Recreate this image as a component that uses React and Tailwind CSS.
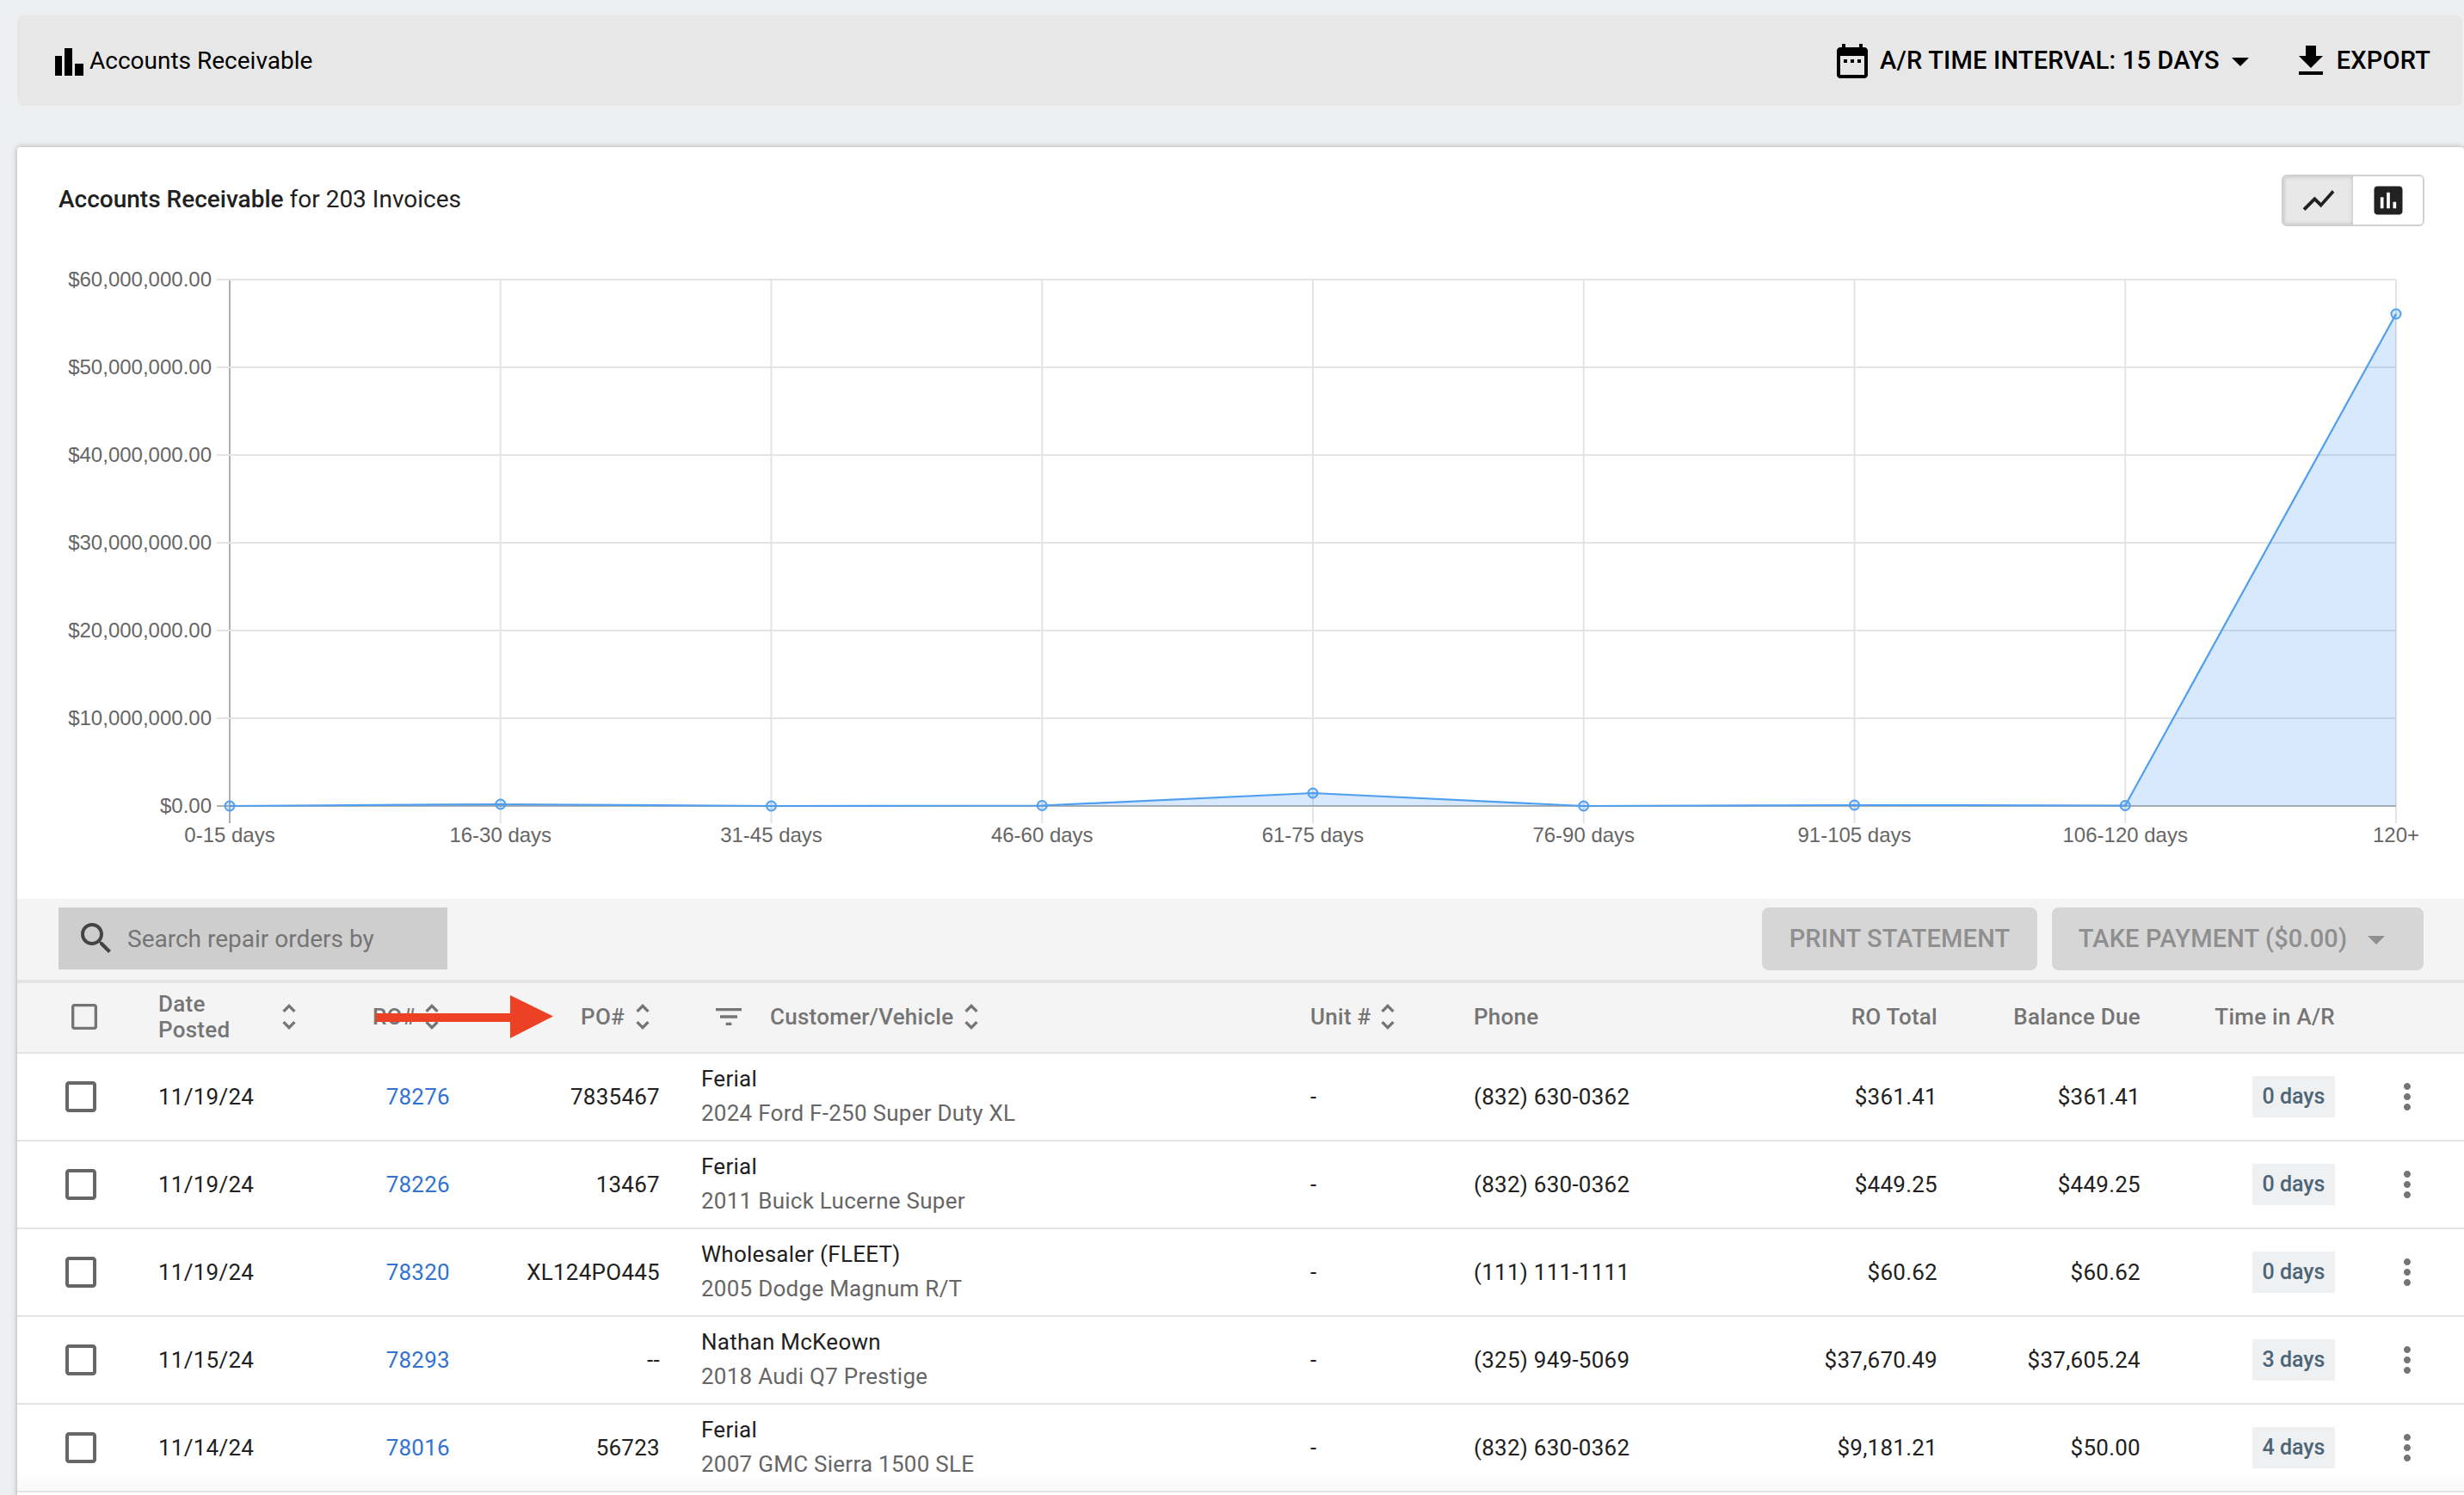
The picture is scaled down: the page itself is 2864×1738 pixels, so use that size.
import React from "react";

const ROW = "grid grid-cols-[164px_236px_105px_242px_756px_190px_339px_200px_236px_226px_150px] items-center";

const Icon = ({ d, size = 48, className = "" }) => (
  <svg width={size} height={size} viewBox="0 0 24 24" fill="currentColor" className={"shrink-0 " + className}>
    <path d={d} />
  </svg>
);

const P = {
  date: "M9 11H7v2h2v-2zm4 0h-2v2h2v-2zm4 0h-2v2h2v-2zm2-7h-1V2h-2v2H8V2H6v2H5c-1.11 0-1.99.9-1.99 2L3 20c0 1.1.89 2 2 2h14c1.1 0 2-.9 2-2V6c0-1.1-.9-2-2-2zm0 16H5V9h14v11z",
  drop: "M7 10l5 5 5-5z",
  download: "M19 9h-4V3H9v6H5l7 7 7-7zM5 18v2h14v-2H5z",
  show: "M3.5 18.49l6-6.01 4 4L22 6.92l-1.41-1.41-7.09 7.97-4-4L2 16.99z",
  assess: "M19 3H5c-1.1 0-2 .9-2 2v14c0 1.1.9 2 2 2h14c1.1 0 2-.9 2-2V5c0-1.1-.9-2-2-2zM9 17H7v-7h2v7zm4 0h-2V7h2v10zm4 0h-2v-4h2v4z",
  search: "M15.5 14h-.79l-.28-.27C15.41 12.59 16 11.11 16 9.5 16 5.91 13.09 3 9.5 3S3 5.91 3 9.5 5.91 16 9.5 16c1.61 0 3.09-.59 4.23-1.57l.27.28v.79l5 4.99L20.49 19l-4.99-5zm-6 0C7.01 14 5 11.99 5 9.5S7.01 5 9.5 5 14 7.01 14 9.5 11.99 14 9.5 14z",
  sort: "M12 5.83L15.17 9l1.41-1.41L12 3 7.41 7.59 8.83 9 12 5.83zm0 12.34L8.83 15l-1.41 1.41L12 21l4.59-4.59L15.17 15 12 18.17z",
  filter: "M10 18h4v-2h-4v2zM3 6v2h18V6H3zm3 7h12v-2H6v2z",
  box: "M19 5v14H5V5h14m0-2H5c-1.1 0-2 .9-2 2v14c0 1.1.9 2 2 2h14c1.1 0 2-.9 2-2V5c0-1.1-.9-2-2-2z",
  more: "M12 8c1.1 0 2-.9 2-2s-.9-2-2-2-2 .9-2 2 .9 2 2 2zm0 2c-1.1 0-2 .9-2 2s.9 2 2 2 2-.9 2-2-.9-2-2-2zm0 6c-1.1 0-2 .9-2 2s.9 2 2 2 2-.9 2-2-.9-2-2-2z",
};

const xs = Array.from({ length: 9 }, (_, i) => 267 + i * 314.75);
const ys = [325, 427, 529, 631, 733, 835, 937];
const yLabels = ["$60,000,000.00", "$50,000,000.00", "$40,000,000.00", "$30,000,000.00", "$20,000,000.00", "$10,000,000.00", "$0.00"];
const xLabels = ["0-15 days", "16-30 days", "31-45 days", "46-60 days", "61-75 days", "76-90 days", "91-105 days", "106-120 days", "120+"];
const vals = [937, 935, 937, 936.5, 922, 937, 936, 936.5, 365];
const pts = xs.map((x, i) => `${x},${vals[i]}`).join(" ");

const Chart = () => (
  <svg width="2844" height="782" viewBox="20 263 2844 782" className="block">
    {xs.map((x, i) => (
      <line key={x} x1={x} x2={x} y1="325" y2="957" stroke={i === 0 ? "#b0b0b0" : "#e4e4e4"} strokeWidth="2" />
    ))}
    {ys.map((y, i) => (
      <line key={y} x1="252" x2="2785" y1={y} y2={y} stroke={i === 6 ? "#b0b0b0" : "#e4e4e4"} strokeWidth="2" />
    ))}
    <polygon points={`267,937 ${pts} 2785,937`} fill="#3a8cf5" fillOpacity="0.2" />
    <polyline points={pts} fill="none" stroke="#4f9ff0" strokeWidth="2.2" />
    {xs.map((x, i) => (
      <circle key={x} cx={x} cy={vals[i]} r="5.5" fill="#3a8cf5" fillOpacity="0.2" stroke="#4f9ff0" strokeWidth="2" />
    ))}
    {yLabels.map((t, i) => (
      <text key={t} x="246" y={ys[i] + 8} textAnchor="end" fontSize="24" fill="#666" fontFamily="'Liberation Sans', sans-serif">{t}</text>
    ))}
    {xLabels.map((t, i) => (
      <text key={t} x={xs[i]} y="979" textAnchor="middle" fontSize="24" fill="#666" fontFamily="'Liberation Sans', sans-serif">{t}</text>
    ))}
  </svg>
);

const rows = [
  ["11/19/24", "78276", "7835467", "Ferial", "2024 Ford F-250 Super Duty XL", "(832) 630-0362", "$361.41", "$361.41", "0 days"],
  ["11/19/24", "78226", "13467", "Ferial", "2011 Buick Lucerne Super", "(832) 630-0362", "$449.25", "$449.25", "0 days"],
  ["11/19/24", "78320", "XL124PO445", "Wholesaler (FLEET)", "2005 Dodge Magnum R/T", "(111) 111-1111", "$60.62", "$60.62", "0 days"],
  ["11/15/24", "78293", "--", "Nathan McKeown", "2018 Audi Q7 Prestige", "(325) 949-5069", "$37,670.49", "$37,605.24", "3 days"],
  ["11/14/24", "78016", "56723", "Ferial", "2007 GMC Sierra 1500 SLE", "(832) 630-0362", "$9,181.21", "$50.00", "4 days"],
];

const Sort = ({ className = "" }) => <Icon d={P.sort} size={40} className={"text-[#757575] " + className} />;

export default function App() {
  return (
    <div className="h-[1738px] overflow-hidden bg-[#eeeff1] pt-[18px] pl-[20px] font-[Roboto] text-[26px] text-[#212121]">
      <header className="mr-[2px] flex h-[105px] items-center justify-between rounded-lg bg-[#e7e7e7] pl-[44px] pr-[37px] text-black">
        <div className="flex items-center">
          <svg width="33" height="32" viewBox="0 0 33 32" fill="currentColor" className="mb-[-2px]">
            <rect x="0" y="9" width="8" height="23" />
            <rect x="11" y="0" width="9" height="32" />
            <rect x="23" y="18" width="10" height="14" />
          </svg>
          <span className="ml-[7px] text-[28px] leading-none">Accounts Receivable</span>
        </div>
        <div className="flex items-center text-[29px] font-medium leading-none tracking-[0.2px]">
          <Icon d={P.date} />
          <span className="ml-[8px]">A/R TIME INTERVAL: 15 DAYS</span>
          <Icon d={P.drop} />
          <Icon d={P.download} className="ml-[34px]" />
          <span className="ml-[6px]">EXPORT</span>
        </div>
      </header>

      <main className="mt-[48px] h-[1600px] rounded-t bg-white shadow-[0_0_6px_rgba(0,0,0,0.3)]">
        <div className="flex items-start justify-between pl-[48px] pr-[46px] pt-[32px]">
          <h1 className="pt-[13px] text-[28px] font-normal leading-[32px]">
            <b className="font-medium">Accounts Receivable</b> for 203 Invoices
          </h1>
          <div className="flex h-[60px] w-[166px] overflow-hidden rounded-md border-2 border-[#d0d0d0]">
            <div className="flex w-[81px] items-center justify-center bg-[#e8e8e8] shadow-[inset_0_0_5px_rgba(0,0,0,0.2)]">
              <Icon d={P.show} size={44} />
            </div>
            <div className="flex flex-1 items-center justify-center bg-white">
              <Icon d={P.assess} size={44} />
            </div>
          </div>
        </div>

        <Chart />

        <div className="flex h-[98px] items-center justify-between border-b-4 border-[#e4e4e4] bg-[#f4f4f4] pb-[2px] pl-[48px] pr-[47px]">
          <div className="flex h-[72px] w-[452px] items-center bg-[#cecece] pl-[20px] text-[28px] text-[#757575]">
            <Icon d={P.search} className="text-[#444]" />
            <span className="ml-[12px] pt-[2px]">Search repair orders by</span>
          </div>
          <div className="flex gap-[17px] text-[29px] font-medium tracking-[0.15px] text-[#8f8f8f]">
            <div className="flex h-[73px] w-[320px] items-center justify-center rounded-lg bg-[#d6d6d6] pt-[2px]">PRINT STATEMENT</div>
            <div className="flex h-[73px] w-[432px] items-center justify-center rounded-lg bg-[#d6d6d6] pt-[2px]">
              TAKE PAYMENT ($0.00)
              <Icon d={P.drop} className="ml-[10px]" />
            </div>
          </div>
        </div>

        <div className={ROW + " h-[82px] border-b-2 border-[#e4e4e4] bg-[#f4f4f4] pb-[2px] font-medium tracking-[0.26px] text-[#757575]"}>
          <div className="pl-[58px]"><Icon d={P.box} size={40} /></div>
          <div className="flex items-center">
            <span className="w-[132px] leading-[30px]">Date<br />Posted</span>
            <Sort />
          </div>
          <div className="relative flex items-center pl-[13px]">
            <span>RO#</span>
            <Sort className="ml-[-2px]" />
          </div>
          <div className="flex items-center justify-end">
            <span>PO#</span>
            <Sort className="ml-[1px]" />
          </div>
          <div className="flex items-center pl-[60px]">
            <Icon d={P.filter} size={40} />
            <span className="ml-[28px]">Customer/Vehicle</span>
            <Sort className="ml-[1px]" />
          </div>
          <div className="flex items-center">
            <span>Unit #</span>
            <Sort />
          </div>
          <div>Phone</div>
          <div className="text-right">RO Total</div>
          <div className="text-right">Balance Due</div>
          <div className="text-right">Time in A/R</div>
          <div />
        </div>

        {rows.map((r, i) => (
          <div
            key={r[1]}
            className={ROW + " h-[102px] border-b-2 border-[#e4e4e4] tracking-[0.26px] " + (i === 4 ? "bg-gradient-to-b from-white from-[80%] to-[#f8f8f8]" : "")}
          >
            <div className="pl-[50px]"><Icon d={P.box} className="text-[#666]" /></div>
            <div>{r[0]}</div>
            <div className="pr-[2px] text-right text-[#3273d1]">{r[1]}</div>
            <div className="text-right">{r[2]}</div>
            <div className="pb-[2px] pl-[48px] leading-[40px]">
              <div>{r[3]}</div>
              <div className="text-[#666]">{r[4]}</div>
            </div>
            <div>-</div>
            <div>{r[5]}</div>
            <div className="text-right">{r[6]}</div>
            <div className="text-right">{r[7]}</div>
            <div className="flex justify-end">
              <span className="flex h-[48px] w-[96px] items-center justify-center bg-[#eef0f2] text-[25px] font-medium tracking-normal text-[#4d6577]">{r[8]}</span>
            </div>
            <div className="pl-[60px] text-[#757575]"><Icon d={P.more} /></div>
          </div>
        ))}
      </main>

      <svg width="206" height="50" viewBox="0 0 206 50" className="absolute left-[437px] top-[1157px]" fill="#ec4124">
        <rect x="0" y="21" width="157" height="10" />
        <polygon points="156,0 206,24.5 156,50" />
      </svg>
    </div>
  );
}
